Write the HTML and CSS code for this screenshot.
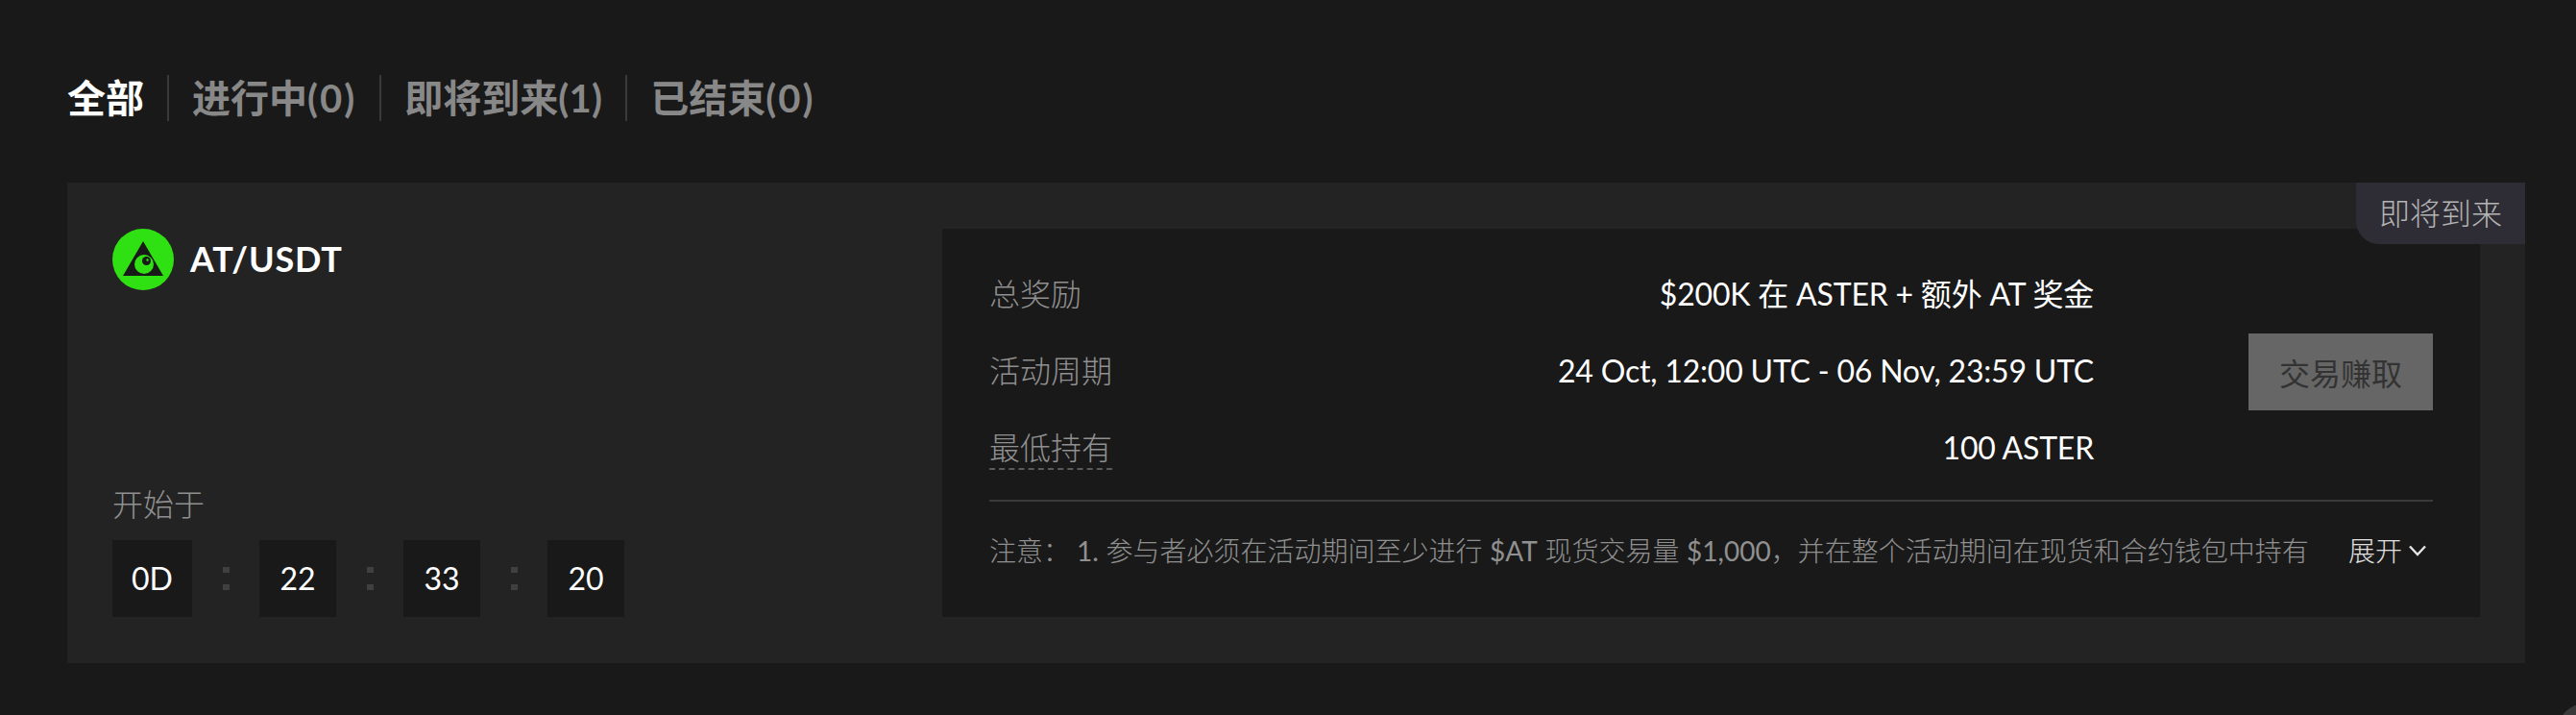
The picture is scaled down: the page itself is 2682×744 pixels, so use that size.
FILE: index.html
```html
<!DOCTYPE html>
<html lang="zh-CN">
<head>
    <meta charset="UTF-8">
    <meta name="viewport" content="width=device-width, initial-scale=1.0">
    <title>交易赚取</title>
    <link rel="stylesheet" href="styles.css">
</head>
<body>
    <div class="page">
        <!-- Tabs -->
        <div class="tabs">
            <span class="tab active">全部</span>
            <span class="tab">进行中<span class="tab-count">(0)</span></span>
            <span class="tab">即将到来<span class="tab-count narrow">(1)</span></span>
            <span class="tab">已结束<span class="tab-count">(0)</span></span>
        </div>

        <!-- Campaign card -->
        <div class="card">
            <span class="status-tag">即将到来</span>

            <div class="card-left">
                <div class="pair">
                    <svg class="pair-logo" viewBox="0 0 64 64">
                        <circle cx="32" cy="32" r="32" fill="#2fe012"/>
                        <path d="M32 13 L53 49 H11 Z" fill="#191919"/>
                        <circle cx="33" cy="37" r="10" fill="#2fe012"/>
                        <circle cx="35.5" cy="33.5" r="4.5" fill="#191919"/>
                        <circle cx="36.5" cy="32.5" r="1.2" fill="#2fe012"/>
                    </svg>
                    <span class="pair-name">AT/USDT</span>
                </div>
                <div class="countdown-box">
                    <div class="countdown-label">开始于</div>
                    <div class="countdown">
                        <span class="time-cell wide">0D</span>
                        <span class="colon"><i></i><i></i></span>
                        <span class="time-cell">22</span>
                        <span class="colon"><i></i><i></i></span>
                        <span class="time-cell">33</span>
                        <span class="colon"><i></i><i></i></span>
                        <span class="time-cell">20</span>
                    </div>
                </div>
            </div>

            <div class="panel">
                <div class="panel-top">
                    <div class="rows">
                        <div class="row">
                            <span class="row-label">总奖励</span>
                            <span class="row-value">$200K 在 ASTER + 额外 AT 奖金</span>
                        </div>
                        <div class="row">
                            <span class="row-label">活动周期</span>
                            <span class="row-value">24 Oct, 12:00 UTC - 06 Nov, 23:59 UTC</span>
                        </div>
                        <div class="row">
                            <span class="row-label dashed">最低持有</span>
                            <span class="row-value">100 ASTER</span>
                        </div>
                    </div>
                    <button class="trade-btn" type="button">交易赚取</button>
                </div>
                <div class="note">
                    <span class="note-title">注意：</span>
                    <div class="note-text"><b>1.</b> 参与者必须在活动期间至少进行 <b>$AT</b> 现货交易量 <b>$1,000</b>，并在整个活动期间在现货和合约钱包中持有 100 ASTER 才有资格参与活动，奖励将在活动结束后按比例发放给符合条件的用户。</div>
                    <span class="note-more">展开
                        <svg class="chevron" viewBox="0 0 20 12"><path d="M2 1.5 L10 10 L18 1.5" fill="none" stroke="#e6e6e6" stroke-width="2.4"/></svg>
                    </span>
                </div>
            </div>
        </div>
    </div>
    <span class="corner-btn"></span>
</body>
</html>
```

FILE: styles.css
```css
html, body {
    margin: 0;
    height: 100%;
    overflow: hidden;
}

body {
    background-color: #191919;
    font-family: Lato, "Noto Sans CJK SC", sans-serif;
    color: #fff;
}

.page {
    padding: 78px 53px 0 70px;
}

/* Tabs */
.tabs {
    display: flex;
    height: 48px;
    margin-bottom: 64px;
}

.tab {
    font-size: 40px;
    font-weight: 700;
    line-height: 48px;
    color: #888888;
    padding: 0 24px;
    border-left: 2px solid #3a3a3a;
}

.tab.active {
    color: #fff;
    padding-left: 0;
    border-left: none;
}

.tab-count {
    letter-spacing: 2px;
}

.tab-count.narrow {
    letter-spacing: 0.3px;
}

/* Card */
.card {
    position: relative;
    display: flex;
    height: 404px;
    padding: 48px 47px 48px 47px;
    background-color: #232323;
}

.status-tag {
    position: absolute;
    top: 0;
    right: 0;
    height: 64px;
    padding: 0 24px;
    font-size: 32px;
    font-weight: 300;
    line-height: 64px;
    color: #b4b4b4;
    background-color: #2e2d35;
    border-bottom-left-radius: 24px;
}

.card-left {
    width: 864px;
    display: flex;
    flex-direction: column;
    justify-content: space-between;
}

.pair {
    display: flex;
    align-items: center;
    gap: 17px;
    height: 64px;
}

.pair-logo {
    width: 64px;
    height: 64px;
}

.pair-name {
    font-size: 36px;
    font-weight: 700;
    letter-spacing: 0.8px;
    margin-top: -3px;
}

.countdown-label {
    font-size: 32px;
    font-weight: 300;
    line-height: 48px;
    color: #909090;
    margin-bottom: 13px;
}

.countdown {
    display: flex;
}

.time-cell {
    width: 80px;
    height: 80px;
    line-height: 80px;
    text-align: center;
    font-size: 32px;
    background-color: #191919;
}

.time-cell.wide {
    width: 83px;
}

.colon {
    width: 70px;
    display: flex;
    flex-direction: column;
    align-items: center;
    justify-content: center;
    gap: 12px;
}

.colon i {
    display: block;
    width: 7px;
    height: 6px;
    background-color: #404040;
}

/* Right panel */
.panel {
    flex: 1;
    padding: 0 49px 0 49px;
    background-color: #191919;
}

.panel-top {
    display: flex;
    align-items: center;
    justify-content: space-between;
    padding: 44px 0 30px;
    border-bottom: 2px solid #3a3a3a;
}

.rows {
    width: 1150px;
    display: flex;
    flex-direction: column;
    gap: 32px;
}

.row {
    display: flex;
    justify-content: space-between;
    line-height: 48px;
    font-size: 32px;
}

.row-label {
    color: #909090;
    font-weight: 300;
}

.row-label.dashed {
    height: 45px;
    border-bottom: 2px dashed #5a5a5a;
}

.row-value {
    color: #fff;
    letter-spacing: -0.2px;
}

.trade-btn {
    width: 192px;
    height: 80px;
    margin-top: 2px;
    border: none;
    padding: 0;
    font-family: inherit;
    font-size: 32px;
    color: #333333;
    background-color: #666666;
}

.note {
    display: flex;
    align-items: flex-start;
    margin-top: 34px;
    font-size: 28px;
    font-weight: 300;
    line-height: 34px;
    color: #909090;
}

.note-title {
    width: 91px;
    flex-shrink: 0;
}

.note-text {
    flex: 1;
    height: 36px;
    overflow: hidden;
}

.note-text b {
    font-weight: 400;
}

.note-more {
    flex-shrink: 0;
    margin-left: 26px;
    display: flex;
    align-items: center;
    gap: 6px;
    color: #e0e0e0;
}

.chevron {
    width: 20px;
    height: 12px;
    margin-right: 6px;
}

/* Scroll button peeking in at the corner */
.corner-btn {
    position: fixed;
    right: -40px;
    bottom: -48px;
    width: 60px;
    height: 60px;
    border-radius: 50%;
    background-color: #3a3a3a;
}
```
